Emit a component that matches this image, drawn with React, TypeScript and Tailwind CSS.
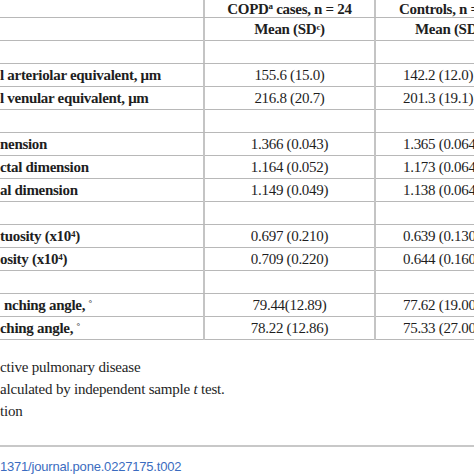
import React from "react";

const serif = { fontFamily: '"Liberation Serif", "Times New Roman", serif' };

type Row = { label: React.ReactNode; a: string; b: string; pl?: string };

const rows: Row[] = [
  { label: "", a: "", b: "" },
  { label: "l arteriolar equivalent, μm", a: "155.6 (15.0)", b: "142.2 (12.0)" },
  { label: "l venular equivalent, μm", a: "216.8 (20.7)", b: "201.3 (19.1)" },
  { label: "", a: "", b: "" },
  { label: "nension", a: "1.366 (0.043)", b: "1.365 (0.064)" },
  { label: "ctal dimension", a: "1.164 (0.052)", b: "1.173 (0.064)" },
  { label: "al dimension", a: "1.149 (0.049)", b: "1.138 (0.064)" },
  { label: "", a: "", b: "" },
  {
    label: (
      <>
        tuosity (x10<sup className="text-[9px]">4</sup>)
      </>
    ),
    a: "0.697 (0.210)",
    b: "0.639 (0.130)",
  },
  {
    label: (
      <>
        osity (x10<sup className="text-[9px]">4</sup>)
      </>
    ),
    a: "0.709 (0.220)",
    b: "0.644 (0.160)",
  },
  { label: "", a: "", b: "" },
  {
    label: (
      <>
        nching angle, <sup className="text-[9px]">°</sup>
      </>
    ),
    a: "79.44(12.89)",
    b: "77.62 (19.00)",
    pl: "pl-[4px]",
  },
  {
    label: (
      <>
        ching angle, <sup className="text-[9px]">°</sup>
      </>
    ),
    a: "78.22 (12.86)",
    b: "75.33 (27.00)",
  },
];

export default function App() {
  return (
    <div
      className="w-[474px] h-[474px] overflow-hidden bg-white text-[#1e1e1e]"
      style={serif}
    >
      <div className="w-[560px] text-[15px] tracking-[-0.3px]">
        {/* header row */}
        <div className="grid grid-cols-[203px_171px_186px] h-[18px] border-b border-[#b8b8b8] font-bold leading-[16px]">
          <div />
          <div className="border-l-2 border-[#c4c4c4] flex items-center justify-center">
            <span>
              COPD<sup className="text-[9px]">a</sup> cases, n = 24
            </span>
          </div>
          <div className="border-l-2 border-[#c4c4c4] flex items-center pl-[23px] whitespace-nowrap">
            <span>Controls, n = 25</span>
          </div>
        </div>
        <div className="grid grid-cols-[203px_171px_186px] h-[23px] border-b border-[#b8b8b8] font-bold">
          <div />
          <div className="border-l-2 border-[#c4c4c4] flex items-center justify-center">
            <span>
              Mean (SD<sup className="text-[9px]">c</sup>)
            </span>
          </div>
          <div className="border-l-2 border-[#c4c4c4] flex items-center pl-[39px] whitespace-nowrap">
            <span>
              Mean (SD<sup className="text-[9px]">c</sup>)
            </span>
          </div>
        </div>
        {rows.map((r, i) => (
          <div
            key={i}
            className="grid grid-cols-[203px_171px_186px] h-[23px] border-b border-[#b8b8b8]"
          >
            <div className={`flex items-center font-bold whitespace-nowrap ${r.pl ?? ""}`}>
              <span>{r.label}</span>
            </div>
            <div className="border-l-2 border-[#c4c4c4] flex items-center justify-center">
              <span>{r.a}</span>
            </div>
            <div className="border-l-2 border-[#c4c4c4] flex items-center pl-[27px] whitespace-nowrap">
              <span>{r.b}</span>
            </div>
          </div>
        ))}
        {/* footnotes */}
        <div className="pt-[16px] h-[107px] border-b-2 border-[#c8c8c8] text-[15px] tracking-[-0.2px] leading-[22px]">
          <div>ctive pulmonary disease</div>
          <div>
            alculated by independent sample <i>t</i> test.
          </div>
          <div>tion</div>
        </div>
        <div
          className="pt-[10px] text-[13px] text-[#3b6cc0] tracking-[-0.2px]"
          style={{ fontFamily: '"Liberation Sans", Arial, sans-serif' }}
        >
          1371/journal.pone.0227175.t002
        </div>
      </div>
    </div>
  );
}
